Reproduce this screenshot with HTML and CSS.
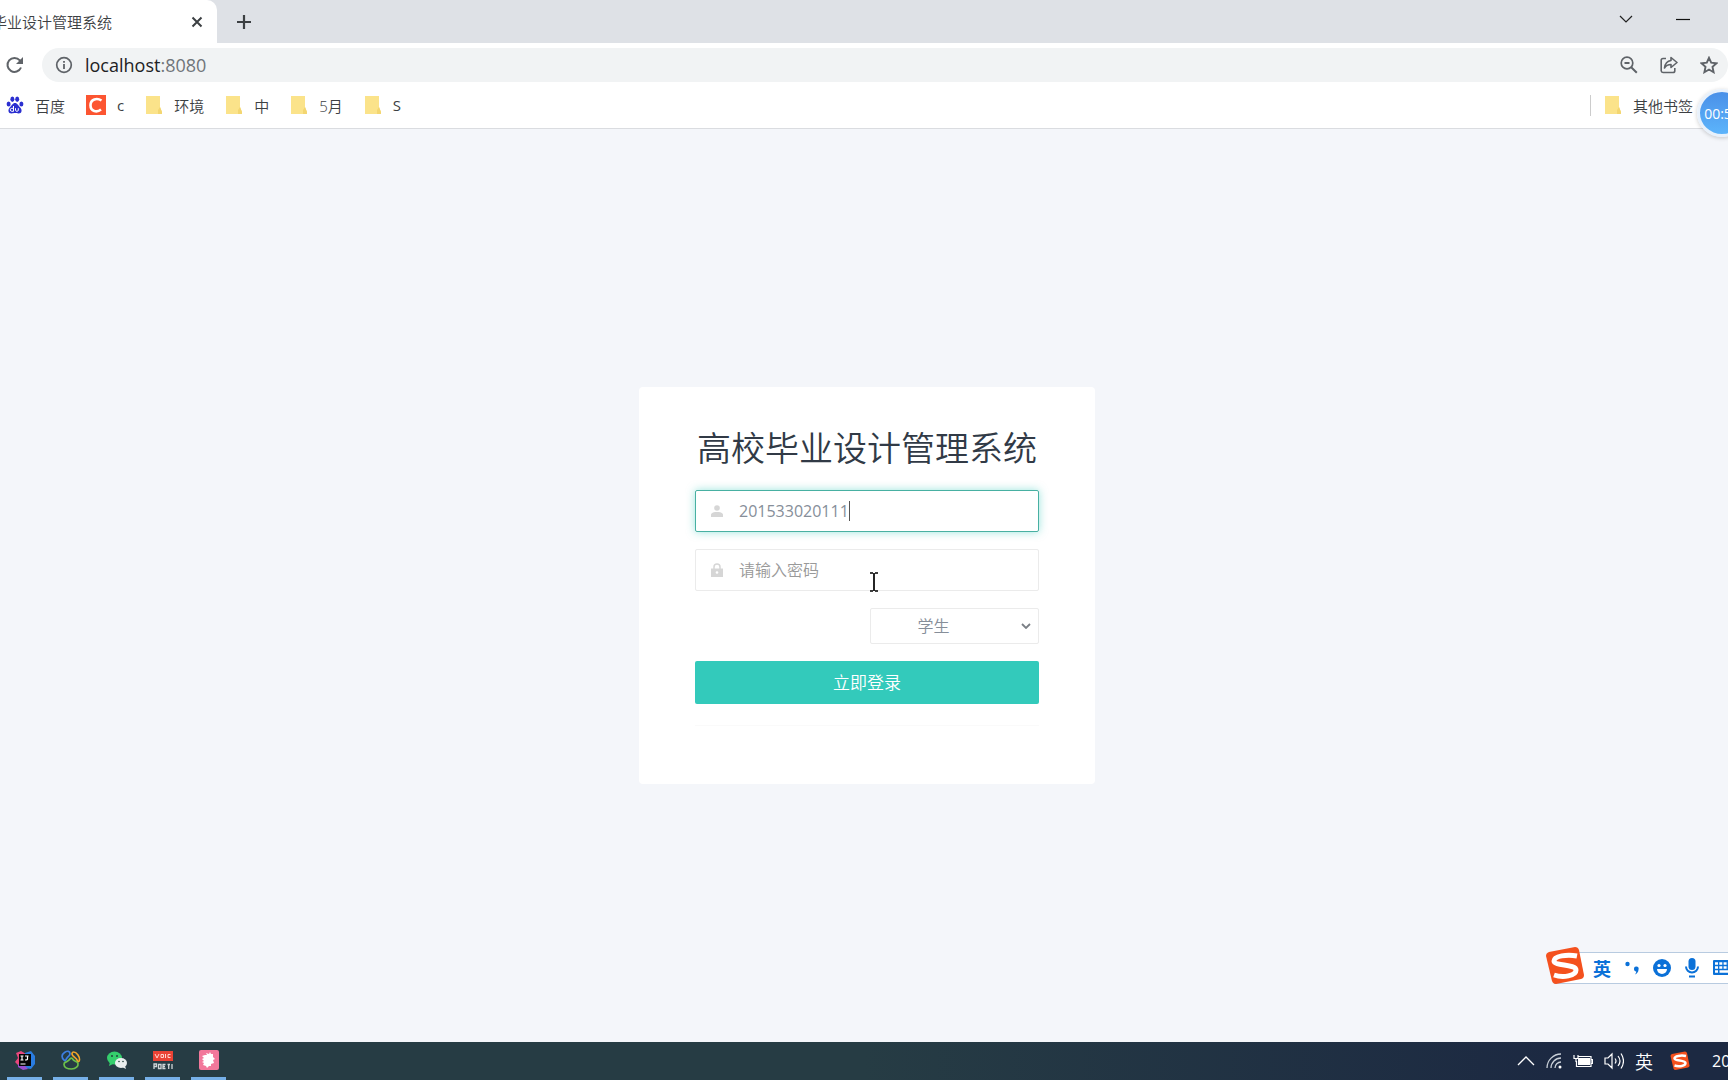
FILE: index.html
```html
<!DOCTYPE html>
<html lang="zh-CN">
<head>
  <meta charset="UTF-8">
  <meta name="viewport" content="width=device-width, initial-scale=1.0">
  <title>高校毕业设计管理系统</title>
  <link rel="stylesheet" href="styles.css">
</head>
<body>
  <header class="browser">
    <div class="tab-strip">
      <div class="tab">
        <span class="tab-title">高校毕业设计管理系统</span>
        <button class="icon-btn tab-close" aria-label="关闭标签页">
          <svg width="12" height="12" viewBox="0 0 12 12"><path d="M1.5 1.5l9 9M10.5 1.5l-9 9" stroke="#3c4043" stroke-width="2"/></svg>
        </button>
      </div>
      <button class="icon-btn new-tab" aria-label="新标签页">
        <svg width="16" height="16" viewBox="0 0 16 16"><path d="M8 1v14M1 8h14" stroke="#3c4043" stroke-width="2.2"/></svg>
      </button>
      <div class="window-buttons">
        <button class="icon-btn" aria-label="搜索标签页">
          <svg width="14" height="14" viewBox="0 0 14 14"><path d="M1 4l6 6 6-6" fill="none" stroke="#222" stroke-width="1.2"/></svg>
        </button>
        <button class="icon-btn" aria-label="最小化">
          <svg width="14" height="14" viewBox="0 0 14 14"><path d="M0 7.5h14" stroke="#111" stroke-width="1.2"/></svg>
        </button>
      </div>
    </div>

    <div class="toolbar">
      <button class="icon-btn" aria-label="重新加载">
        <svg width="18" height="18" viewBox="0 0 18 18"><path d="M15 11.5a7 7 0 1 1-1.2-7.2L15.5 6" fill="none" stroke="#5f6368" stroke-width="2"/><path d="M17 1v7h-7z" fill="#5f6368"/></svg>
      </button>
      <div class="omnibox">
        <svg width="18" height="18" viewBox="0 0 18 18"><circle cx="9" cy="9" r="7.3" fill="none" stroke="#5f6368" stroke-width="1.7"/><path d="M9 8v5M9 5v1.8" stroke="#5f6368" stroke-width="1.8"/></svg>
        <span class="url">localhost<span class="port">:8080</span></span>
        <div class="omnibox-actions">
          <button class="icon-btn" aria-label="缩放">
            <svg width="18" height="18" viewBox="0 0 18 18"><circle cx="7" cy="7" r="5.8" fill="none" stroke="#5f6368" stroke-width="1.7"/><path d="M4.5 7h5M11.2 11.2l5.6 5.6" stroke="#5f6368" stroke-width="2"/></svg>
          </button>
          <button class="icon-btn" aria-label="分享">
            <svg width="18" height="18" viewBox="0 0 18 18" fill="none" stroke="#5f6368" stroke-width="1.6" stroke-linejoin="round"><path d="M6 2.5H3a1.8 1.8 0 0 0-1.8 1.8v10.5A1.8 1.8 0 0 0 3 16.5h10a1.8 1.8 0 0 0 1.8-1.8V12"/><path d="M11 1.5l6 5-6 5V8.500c-3 0-5 1-6.500 3.500C5 8 7 5 11 4.500z"/></svg>
          </button>
          <button class="icon-btn" aria-label="收藏">
            <svg width="18" height="18" viewBox="0 0 18 18"><path d="M9 1.8l2.200 4.900 5.300.6-4 3.600 1.100 5.300L9 13.500l-4.600 2.700 1.100-5.300-4-3.600 5.300-.6z" fill="none" stroke="#5f6368" stroke-width="1.900"/></svg>
          </button>
        </div>
      </div>
    </div>

    <nav class="bookmarks">
      <a href="#">
        <svg width="18" height="18" viewBox="0 0 18 18" fill="#2b2fd0"><ellipse cx="2.600" cy="8" rx="2" ry="2.600"/><ellipse cx="6.400" cy="3.200" rx="2" ry="2.700"/><ellipse cx="11.200" cy="3.200" rx="2" ry="2.700"/><ellipse cx="15.400" cy="8" rx="2" ry="2.600"/><path d="M9 7c2.500 0 3 2.500 5 4.200 2.500 2.200 2 6.300-1.500 6.300-1.500 0-2-.4-3.500-.4s-2 .4-3.500.4C2 17.500 1.500 13.400 4 11.200 6 9.500 6.500 7 9 7z"/><path d="M7.500 10v5.300H5.800a1.300 1.300 0 0 1 0-3h1.700M9.500 12.200v2c0 1.500 2.800 1.500 2.800 0v-2" fill="none" stroke="#fff"/></svg>
        百度
      </a>
      <a href="#" class="latin">
        <svg width="20" height="20" viewBox="0 0 20 20"><path d="M0 0h20v20H0z" fill="#fc5531"/><path d="M15.500 5.500C11 2.500 4.500 4 4.500 10.300s6.500 7.500 10.500 4.200" fill="none" stroke="#fff" stroke-width="2.600"/></svg>
        c
      </a>
      <a href="#"><svg width="18" height="20" viewBox="0 0 18 20"><use href="#folder"/></svg>环境</a>
      <a href="#"><svg width="18" height="20" viewBox="0 0 18 20"><use href="#folder"/></svg>中</a>
      <a href="#"><svg width="18" height="20" viewBox="0 0 18 20"><use href="#folder"/></svg>5月</a>
      <a href="#" class="latin"><svg width="18" height="20" viewBox="0 0 18 20"><use href="#folder"/></svg>S</a>
      <a href="#" class="other"><svg width="18" height="20" viewBox="0 0 18 20"><use href="#folder"/></svg>其他书签</a>
    </nav>
  </header>

  <main class="page">
    <form class="login-box">
      <h1>高校毕业设计管理系统</h1>
      <div class="field active">
        <svg width="12" height="12" viewBox="0 0 12 12" fill="#d6d6d6"><circle cx="6" cy="3" r="2.800"/><path d="M0 12V9.800C0 7.500 3.500 7 6 7s6 .5 6 2.800V12z"/></svg>
        <input type="text" value="201533020111" aria-label="账号">
        <i class="caret"></i>
      </div>
      <div class="field">
        <svg width="12" height="14" viewBox="0 0 12 14"><path d="M3 6V4a3 3 0 0 1 6 0v2" fill="none" stroke="#d6d6d6" stroke-width="1.500"/><path d="M0 5.500h12V14H0z" fill="#d6d6d6"/><circle cx="6" cy="9.500" r="1.300" fill="#fff"/></svg>
        <input type="password" placeholder="请输入密码" aria-label="密码">
      </div>
      <div class="role">
        <select aria-label="角色">
          <option>学生</option>
          <option>教师</option>
          <option>管理员</option>
        </select>
        <svg width="10" height="6" viewBox="0 0 10 6"><path d="M1 1l4 4 4-4" fill="none" stroke="#7a7f85" stroke-width="1.800"/></svg>
      </div>
      <button type="button" class="login-btn">立即登录</button>
      <hr>
    </form>
  </main>

  <footer class="taskbar">
    <div class="apps">
      <button aria-label="IntelliJ IDEA">
        <svg width="20" height="20" viewBox="0 0 20 20"><path d="M1 3l5-2 5 3-6 13-5-5 3-4z" fill="#e8467c"/><path d="M10 3l6-2 4 5v8l-4 5-7-1z" fill="#2a7de1"/><path d="M3 14l6 1 4 4-5 1-5-3z" fill="#9a4fd0"/><path d="M4 4h12v12H4z" fill="#050505"/><path d="M5.500 6h3M7 6v4M5.500 10h3M10 6h3.500M12.500 6v3q0 1-2.500 1M5.500 14h5" stroke="#fff" stroke-width="1.200" fill="none"/></svg>
      </button>
      <button aria-label="Navicat">
        <svg width="20" height="20" viewBox="0 0 20 20" fill="none" stroke-width="1.700"><path d="M3.500 10.500C0 8 .5 4.500 3.500 2.500S9 1 9 3.500 7.500 6 6 8s-1.500 3.500-2.500 2.500z" stroke="#3d7fe0"/><path d="M12.500 2c3 0 6.500 4.500 6 8-.4 2.500-2 2-2.500 0S10.500 6 11 3.500q.4-1.500 1.500-1.500z" stroke="#f0a52a"/><path d="M5 12c1.500-1 2.500-1 3.500-2.500s2.500-2 3.500 0 4.500 1.500 5 4-2 5.500-6.500 5.500-7.500-2-7.500-4.500S4 12.700 5 12z" stroke="#6cc04a"/></svg>
      </button>
      <button aria-label="微信">
        <svg width="20" height="20" viewBox="0 0 20 20"><ellipse cx="7.500" cy="8" rx="7.500" ry="6.500" fill="#35cf6d"/><path d="M3 12l-1 4 4-2z" fill="#35cf6d"/><ellipse cx="14" cy="13" rx="6" ry="5" fill="#e9eeee"/><path d="M18 16l1 3-4-2z" fill="#e9eeee"/><g fill="#24443d"><circle cx="5" cy="6" r="1"/><circle cx="10" cy="6" r="1"/><circle cx="12" cy="11.500" r=".8"/><circle cx="16" cy="11.500" r=".8"/></g></svg>
      </button>
      <button aria-label="录音">
        <svg width="20" height="20" viewBox="0 0 20 20"><path d="M0 1h20v10H0z" fill="#ea4335"/><path d="M2 4l2 4 2-4M8 4.500h2.500v3H8zM12.500 4v4M17.500 4.500H15v3h2.500" fill="none" stroke="#ffd5cf"/><path d="M1 19v-5h2.500v2.500H1M5.500 14.500H8v4H5.500zM12.500 14.500H10v4h2.500M10 16.500h2M14.500 14.500H17M15.700 14.500V19M19 14v5" fill="none" stroke="#cfd6d8" stroke-width="1.300"/></svg>
      </button>
      <button aria-label="图片">
        <svg width="20" height="20" viewBox="0 0 20 20"><rect width="20" height="20" rx="2" fill="#f2789b"/><path d="M6 5l2 0-1-2 3 1 1-2 1 2 2 0 0 3 2 2-2 1 1 3-3 1 0 2-2 0-2 2-1-2-3-1 1-2-2-1 2-1-2-2 2-1-2-2z" fill="#fff"/></svg>
      </button>
    </div>
    <div class="tray">
      <svg width="18" height="10" viewBox="0 0 18 10"><path d="M1 9l8-8 8 8" fill="none" stroke="#fff" stroke-width="1.300"/></svg>
      <svg width="16" height="16" viewBox="0 0 16 16" fill="none" stroke="#c9d0d8" stroke-width="1.300"><path d="M1 15A14 14 0 0 1 15 1M5 15A10 10 0 0 1 15 5M9 15a6 6 0 0 1 6-6"/><circle cx="14" cy="14" r="1.500" fill="#fff" stroke="none"/></svg>
      <svg width="20" height="14" viewBox="0 0 20 14"><path d="M5 4h12v7H5z" fill="#fff"/><path d="M5 2.500h13v10H3.500V7M18 5.500h1.500v4H18M1 1v3.500h4V1M3 4.500V8" fill="none" stroke="#fff" stroke-width="1.200"/></svg>
      <svg width="20" height="18" viewBox="0 0 20 18" fill="none" stroke="#fff" stroke-width="1.200"><path d="M1 6h3l4-4v14l-4-4H1zM11 6.500q2 2.500 0 5M14 4q4 5 0 10M17 1.500q5 7.500 0 15"/></svg>
      <span class="lang">英</span>
      <svg width="20" height="20" viewBox="0 0 40 40"><use href="#sogou"/></svg>
      <time>2022</time>
    </div>
  </footer>

  <button class="timer">00:50</button>

  <div class="ime">
    <svg class="ime-logo" width="40" height="40" viewBox="0 0 40 40"><use href="#sogou"/></svg>
    <b>英</b>
    <svg width="14" height="14" viewBox="0 0 14 14" fill="#0b71d8"><circle cx="2.500" cy="3" r="2.200"/><path d="M9 8a2.300 2.300 0 1 1 4.500.5c0 2.500-1.500 4-3.500 5 .8-1.200 1.300-2 1.200-3C9.800 10.500 9 9.500 9 8z"/></svg>
    <svg width="18" height="18" viewBox="0 0 18 18"><circle cx="9" cy="9" r="9" fill="#0b71d8"/><g fill="#fff"><circle cx="6" cy="6.500" r="1.600"/><circle cx="12" cy="6.500" r="1.600"/><path d="M4 10h10a5 5 0 0 1-10 0z"/></g></svg>
    <svg width="14" height="20" viewBox="0 0 14 20"><rect x="3.500" width="7" height="12" rx="3.500" fill="#0b71d8"/><path d="M1 8.500a6 6 0 0 0 12 0M4 18.500h6" fill="none" stroke="#0b71d8" stroke-width="2"/></svg>
    <svg width="22" height="16" viewBox="0 0 22 16"><rect width="22" height="15" rx="1" fill="#0b71d8"/><path d="M2 3.500h18M2 7.500h18" stroke="#fff" stroke-width="2.400" stroke-dasharray="3 1.300"/><path d="M2 11.500h3M6.500 11.500h9" stroke="#fff" stroke-width="2.400"/></svg>
  </div>

  <!-- mouse pointer resting over the password box -->
  <svg class="pointer" width="8" height="20" viewBox="0 0 8 20"><path d="M0 1h3M5 1h3M0 19h3M5 19h3M4 1v18" stroke="#000" stroke-width="1.700"/></svg>

  <svg class="defs" width="0" height="0">
    <symbol id="folder" viewBox="0 0 18 20"><path d="M1 1h14v11l2 5v2H1z" fill="#fbe38a"/><path d="M13 15l2-3 2 5v2h-4z" fill="#f3d671"/></symbol>
    <symbol id="sogou" viewBox="0 0 40 40"><path d="M4 6L30 1q3 0 4 3l5 25q0 3-3 4l-25 5q-3 0-4-3L1 10q0-3 3-4z" fill="#f4511e"/><path d="M32 10C22 8 9 10 9 15s22 3 22 9-13 8-22 5" fill="none" stroke="#fff" stroke-width="5"/></symbol>
  </svg>
</body>
</html>
```
FILE: styles.css
```css
* {
  box-sizing: border-box;
}
body {
  margin: 0;
  height: 100vh;
  display: flex;
  flex-direction: column;
  overflow: hidden;
  font-family: "Open Sans", "Noto Sans CJK SC", sans-serif;
  font-weight: 350;
  background-color: #f4f6fa;
}
button, input, select {
  font: inherit;
}
svg {
  display: block;
  flex: none;
}
.defs {
  position: absolute;
}
.icon-btn {
  display: flex;
  padding: 0;
  border: none;
  background: none;
  cursor: pointer;
}

/* browser window */
.browser {
  background-color: #fff;
  border-bottom: 1px solid #dadce0;
}
.tab-strip {
  display: flex;
  align-items: center;
  height: 43px;
  background-color: #dee1e6;
}
.tab {
  display: flex;
  align-items: center;
  justify-content: space-between;
  width: 217px;
  height: 43px;
  padding-right: 14px;
  background-color: #fff;
  border-top-right-radius: 10px;
}
.tab-title {
  margin-left: -38px;
  font-size: 15px;
  color: #3c4043;
  white-space: nowrap;
}
.new-tab {
  padding-left: 19px;
}
.window-buttons {
  display: flex;
  gap: 43px;
  margin-left: auto;
  padding: 0 38px 6px 0;
}
.toolbar {
  display: flex;
  align-items: center;
  gap: 18px;
  padding: 5px 0 0 6px;
}
.omnibox {
  flex: 1;
  display: flex;
  align-items: center;
  height: 34px;
  padding: 0 10px 0 13px;
  border-radius: 17px;
  background-color: #f1f3f4;
}
.url {
  margin-left: 12px;
  font-size: 18px;
  font-weight: 400;
  color: #202124;
}
.port {
  color: #70757a;
}
.omnibox-actions {
  display: flex;
  gap: 22px;
  margin-left: auto;
}
.bookmarks {
  display: flex;
  align-items: center;
  gap: 21px;
  height: 46px;
  padding: 0 35px 0 6px;
}
.bookmarks a {
  display: flex;
  align-items: center;
  gap: 11px;
  font-size: 15px;
  color: #3c4043;
  text-decoration: none;
}
.bookmarks .latin {
  font-weight: 400;
}
.bookmarks .other {
  margin-left: auto;
  padding-left: 13px;
  border-left: 1px solid #ccc;
}

/* login */
.page {
  flex: 1;
  display: flex;
  align-items: center;
  justify-content: center;
  padding-left: 6px;
}
.login-box {
  width: 456px;
  padding: 36px 56px 58px;
  border-radius: 4px;
  background-color: #fff;
}
.login-box h1 {
  margin: 0 0 17px;
  font-size: 34px;
  font-weight: 350;
  line-height: 50px;
  text-align: center;
  color: #313a46;
  white-space: nowrap;
}
.field {
  display: flex;
  align-items: center;
  height: 42px;
  margin-bottom: 17px;
  padding: 0 15px;
  border: 1px solid #ebebeb;
  border-radius: 2px;
}
.field.active {
  border-color: #48b0a2;
  box-shadow: 0 0 8px rgba(51, 202, 187, 0.5);
}
.field input {
  flex: 1;
  min-width: 0;
  margin-left: 16px;
  padding: 0;
  border: none;
  outline: none;
  background: none;
  font-size: 16px;
  color: #868e99;
}
.field.active input {
  flex: none;
  field-sizing: content;
  font-weight: 400;
}
.caret {
  width: 1px;
  height: 20px;
  background-color: #555;
}
.field input::placeholder {
  color: #999;
}
.role {
  position: relative;
  width: 169px;
  margin: 0 0 17px auto;
}
.role select {
  display: block;
  width: 100%;
  height: 36px;
  padding: 0 42px 0 0;
  border: 1px solid #ebebeb;
  border-radius: 2px;
  background-color: #fff;
  appearance: none;
  font-size: 16px;
  text-align: center;
  text-align-last: center;
  color: #868e99;
}
.role svg {
  position: absolute;
  top: 15px;
  right: 8px;
  pointer-events: none;
}
.login-btn {
  display: block;
  width: 100%;
  height: 43px;
  padding: 0;
  border: none;
  border-radius: 2px;
  background-color: #33cabb;
  font-size: 17px;
  line-height: 24px;
  color: #fff;
  cursor: pointer;
}
.login-box hr {
  margin: 21px 0 0;
  border: none;
  border-top: 1px solid #fafafa;
}

/* taskbar */
.taskbar {
  display: flex;
  justify-content: space-between;
  height: 38px;
  background: linear-gradient(90deg, #263c44 50%, #1c2942 90%);
  color: #fff;
}
.apps {
  display: flex;
  gap: 11px;
  padding-left: 7px;
}
.apps button {
  display: flex;
  align-items: center;
  justify-content: center;
  width: 35px;
  padding: 0;
  border: none;
  border-bottom: 3px solid #76b0e8;
  background: none;
}
.tray {
  display: flex;
  align-items: center;
  gap: 11px;
}
.lang {
  margin-right: 6px;
  font-size: 18px;
}
.tray time {
  width: 16px;
  margin-left: 11px;
  overflow: hidden;
  font-size: 16px;
  font-weight: 400;
}

/* floating tools */
.timer {
  position: absolute;
  top: 89px;
  right: -19px;
  width: 50px;
  height: 48px;
  padding: 0;
  border: 3px solid #e8f1fb;
  border-radius: 50%;
  background: linear-gradient(#4a90e8, #5cb4fb);
  box-shadow: 0 1px 4px rgba(0, 0, 0, 0.2);
  font-size: 14px;
  font-weight: 400;
  color: #fff;
}
.ime {
  position: absolute;
  right: -8px;
  bottom: 96px;
  display: flex;
  align-items: center;
  gap: 14px;
  height: 32px;
  border: 1px solid #b8cbe0;
  background-color: #fff;
  font-size: 18px;
  color: #0b71d8;
}
.ime b {
  font-weight: 700;
}
.ime-logo {
  margin: -4px -6px 0 -10px;
}
.pointer {
  position: absolute;
  top: 572px;
  left: 870px;
}
```
